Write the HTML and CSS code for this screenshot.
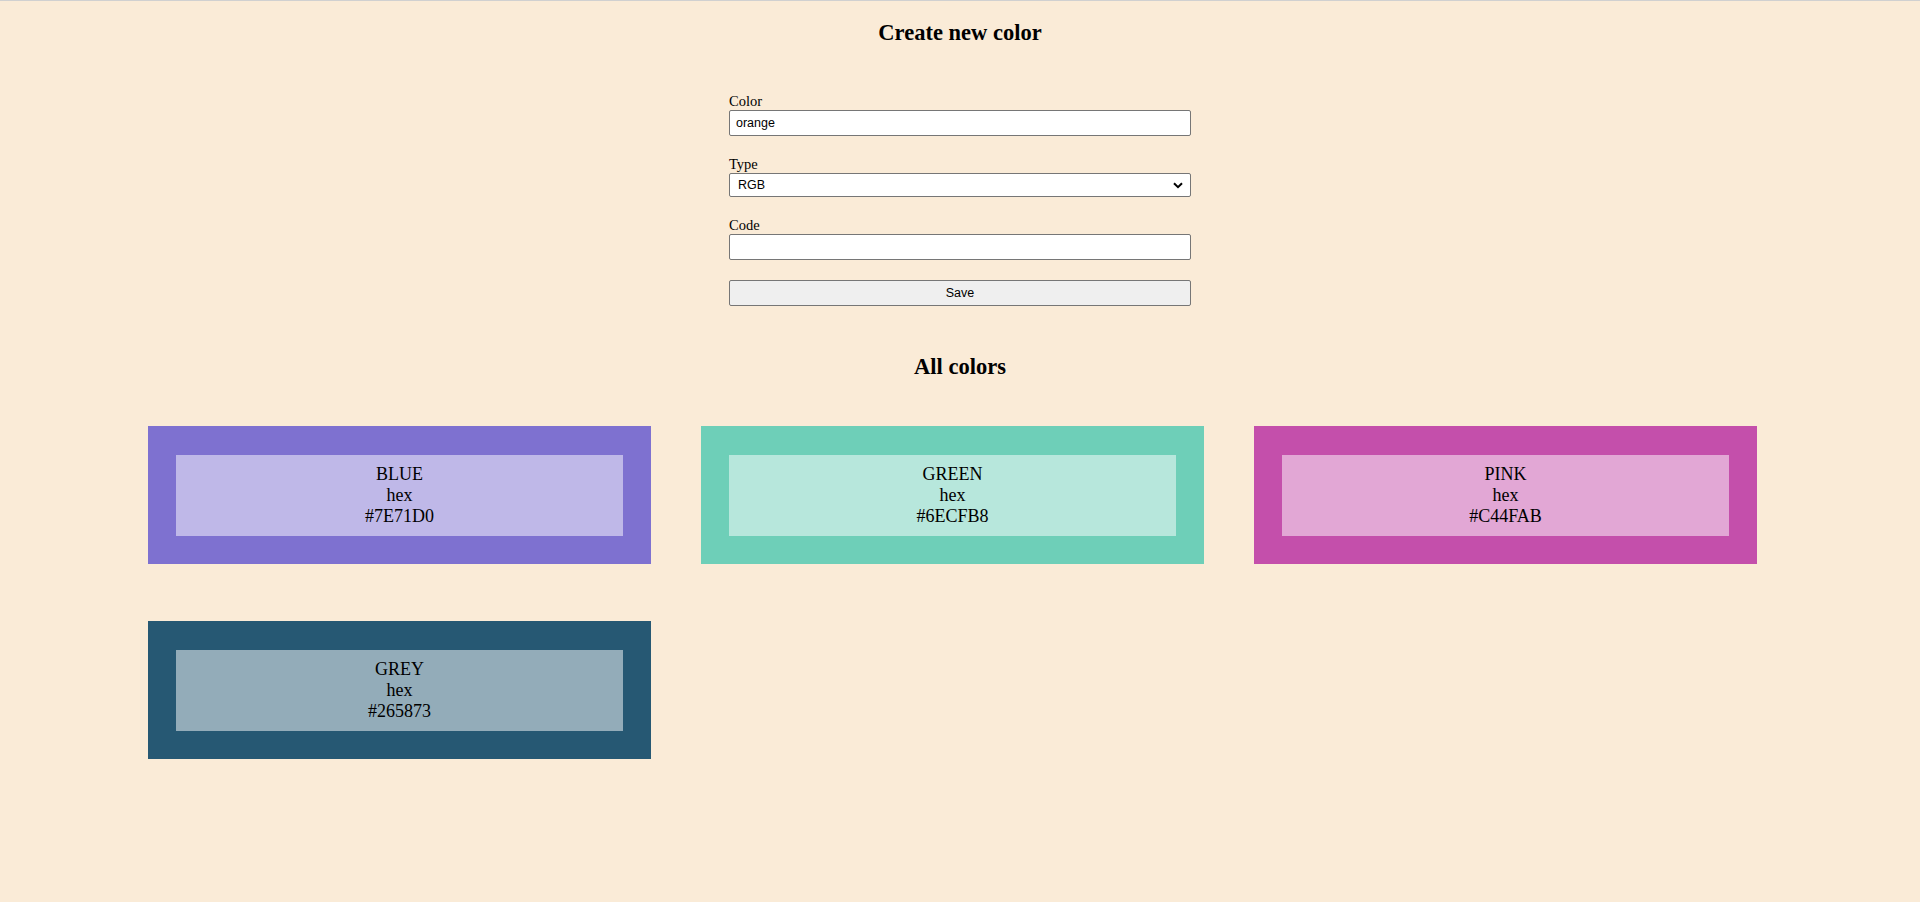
FILE: index.html
```html
<!DOCTYPE html>
<html lang="en">
<head>
<meta charset="utf-8">
<title>Colors</title>
<link rel="stylesheet" href="styles.css">
</head>
<body>
  <h1 class="page-title">Create new color</h1>

  <form class="color-form">
    <div class="field">
      <label class="field-label" for="color">Color</label>
      <input class="text-input" id="color" type="text" value="orange">
    </div>
    <div class="field">
      <label class="field-label" for="type">Type</label>
      <div class="select-wrap">
        <select class="select-input" id="type">
          <option>RGB</option>
          <option>HEX</option>
        </select>
        <svg class="select-chevron" width="10" height="7" viewBox="0 0 10 7"><path d="M1 1.2 L5 5.2 L9 1.2" fill="none" stroke="#000" stroke-width="2"/></svg>
      </div>
    </div>
    <div class="field">
      <label class="field-label" for="code">Code</label>
      <input class="text-input" id="code" type="text">
    </div>
    <button class="save-button" type="button">Save</button>
  </form>

  <h2 class="section-title">All colors</h2>

  <div class="color-grid">
    <div class="color-card" style="background:#7E71D0">
      <div class="color-info">BLUE<br>hex<br>#7E71D0</div>
    </div>
    <div class="color-card" style="background:#6ECFB8">
      <div class="color-info">GREEN<br>hex<br>#6ECFB8</div>
    </div>
    <div class="color-card" style="background:#C44FAB">
      <div class="color-info">PINK<br>hex<br>#C44FAB</div>
    </div>
    <div class="color-card" style="background:#265873">
      <div class="color-info">GREY<br>hex<br>#265873</div>
    </div>
  </div>
</body>
</html>
```

FILE: styles.css
```css
html, body {
  margin: 0;
  padding: 0;
}

body {
  background: #FAEBD7;
  border-top: 1px solid #d0d0d0;
  font-family: "Liberation Serif", "Times New Roman", serif;
  color: #000;
  min-height: 901px;
}

.page-title {
  margin: 19px 0 0;
  font-size: 22.5px;
  line-height: 26px;
  font-weight: bold;
  text-align: center;
}

.color-form {
  width: 462px;
  margin: 46px auto 0;
  display: flex;
  flex-direction: column;
  gap: 19px;
}

.field {
  display: flex;
  flex-direction: column;
}

.field-label {
  display: block;
  font-size: 14.5px;
  line-height: 18px;
  height: 18px;
}

.text-input {
  box-sizing: border-box;
  height: 26px;
  margin: 0;
  padding: 0 6px;
  border: 1px solid #767676;
  border-radius: 2px;
  background: #fff;
  font-family: "Liberation Sans", Arial, sans-serif;
  font-size: 12.5px;
  color: #000;
  outline: none;
}

.select-wrap {
  position: relative;
}

.select-input {
  box-sizing: border-box;
  width: 100%;
  height: 24px;
  margin: 0;
  padding: 0 8px;
  border: 1px solid #767676;
  border-radius: 2px;
  background: #fff;
  font-family: "Liberation Sans", Arial, sans-serif;
  font-size: 12.5px;
  color: #000;
  appearance: none;
  -webkit-appearance: none;
  outline: none;
}

.select-chevron {
  position: absolute;
  right: 8px;
  top: 9px;
  pointer-events: none;
}

.save-button {
  box-sizing: border-box;
  height: 26px;
  margin: 1px 0 0;
  padding: 0;
  border: 1px solid #767676;
  border-radius: 2px;
  background: #efefef;
  font-family: "Liberation Sans", Arial, sans-serif;
  font-size: 12.5px;
  color: #000;
}

.section-title {
  margin: 48px 0 0;
  font-size: 22.5px;
  line-height: 26px;
  font-weight: bold;
  text-align: center;
}

.color-grid {
  display: grid;
  grid-template-columns: repeat(3, 503px);
  column-gap: 50px;
  row-gap: 57px;
  margin-top: 46px;
  padding-left: 148px;
}

.color-card {
  padding: 29px 28px 28px;
}

.color-info {
  background: rgba(255, 255, 255, 0.5);
  padding: 9px 0;
  font-size: 18px;
  line-height: 21px;
  text-align: center;
}
```
